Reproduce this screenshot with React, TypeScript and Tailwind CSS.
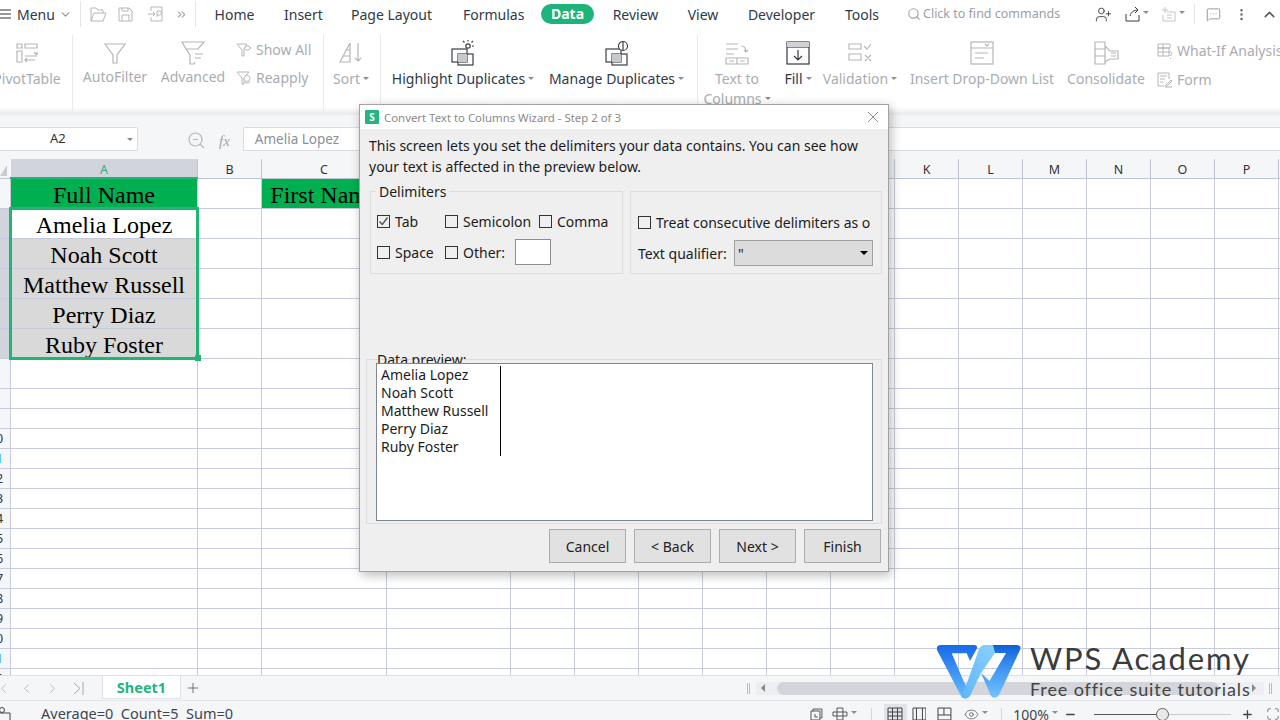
import React from 'react';
import { Search, ChevronDown, ChevronUp, ChevronLeft, ChevronRight, ChevronsRight, Plus, Minus, EllipsisVertical, MessageSquareMore, UserPlus, Eye, Maximize } from 'lucide-react';

const gridLine = 'border-[#c6ccdd]';
const columns = [
  { id: 'A', w: 'w-[187px]' }, { id: 'B', w: 'w-[64px]' }, { id: 'C', w: 'w-[125px]' }, { id: 'D', w: 'w-[124px]' },
  { id: 'E', w: 'w-[64px]' }, { id: 'F', w: 'w-[64px]' }, { id: 'G', w: 'w-[64px]' }, { id: 'H', w: 'w-[64px]' },
  { id: 'I', w: 'w-[64px]' }, { id: 'J', w: 'w-[64px]' }, { id: 'K', w: 'w-[64px]' }, { id: 'L', w: 'w-[64px]' },
  { id: 'M', w: 'w-[64px]' }, { id: 'N', w: 'w-[64px]' }, { id: 'O', w: 'w-[64px]' }, { id: 'P', w: 'w-[64px]' }, { id: 'Q', w: 'w-[64px]' },
];
const rowHeights: string[] = [...Array(7).fill('h-[30px]'), ...Array(15).fill('h-[20px]')];
const names = ['Amelia Lopez', 'Noah Scott', 'Matthew Russell', 'Perry Diaz', 'Ruby Foster'];

const Caret = () => (
  <span className="inline-block w-0 h-0 border-x-[3px] border-x-transparent border-t-[3px] border-t-[#8a8f96] align-middle ml-[3px] mb-[3px]" />
);

const Ico = ({ w = 28, h = 26, color = '#b4b6b9', children }: { w?: number; h?: number; color?: string; children: React.ReactNode }) => (
  <svg width={w} height={h} viewBox={`0 0 ${w} ${h}`} fill="none" stroke={color} strokeWidth="1.2">{children}</svg>
);

const Tab = ({ className, label }: { className: string; label: string }) => (
  <div className={`shrink-0 text-center text-[14px] text-[#2e3a48] whitespace-nowrap ${className}`}>{label}</div>
);

const RibbonBtn = ({ className, icon, label, caret, muted = true, up }: { className: string; icon: React.ReactNode; label: React.ReactNode; caret?: boolean; muted?: boolean; up?: boolean }) => (
  <div className={`shrink-0 flex flex-col items-center pt-[12px] text-[14px] leading-5 text-center ${muted ? 'text-[#a9adb2]' : 'text-[#2e3a48]'} ${className}`}>
    <div className="h-[26px] flex items-center justify-center">{icon}</div>
    <div className={up ? 'mt-[1px] whitespace-nowrap' : 'mt-[3px] whitespace-nowrap'}>
      {label}
      {caret && <Caret />}
    </div>
  </div>
);

const Sep = ({ className }: { className: string }) => <div className={`w-px shrink-0 h-[76px] mt-[7px] bg-[#e9eaec] ${className}`} />;

const DupIcon = ({ mark }: { mark: React.ReactNode }) => (
  <Ico color="#3a3f45">
    <rect x="3" y="9" width="15" height="13" fill="#fff" />
    <rect x="9" y="14" width="15" height="11" fill="none" />
    <rect x="9" y="14" width="9" height="8" fill="#c9c9c9" stroke="none" />
    {mark}
  </Ico>
);

const Box = ({ checked }: { checked?: boolean }) => (
  <span className="shrink-0 w-[13px] h-[13px] border border-[#333] bg-transparent flex items-center justify-center">
    {checked && (
      <svg width="11" height="11" viewBox="0 0 11 11" fill="none" stroke="#555" strokeWidth="1.4"><path d="M1.5 5.5 4.3 8.5 9.5 1.5" /></svg>
    )}
  </span>
);

const Check = ({ label, className = '', checked }: { label: string; className?: string; checked?: boolean }) => (
  <label className={`shrink-0 flex items-center whitespace-nowrap ${className}`}>
    <Box checked={checked} />
    <span className="ml-[5px]">{label}</span>
  </label>
);

const WizardButton = ({ label }: { label: string }) => (
  <button className="w-[77px] h-[34px] bg-[#e1e1e1] border border-[#adadad] text-[14px] text-[#222]">{label}</button>
);

const Dialog = () => (
  <div className="absolute left-[359px] top-[104px] w-[530px] h-[468px] bg-[#efefef] border border-[#a3a3a3] shadow-[2px_3px_10px_rgba(0,0,0,0.28)] text-[14px] text-[#1c1c1c] leading-[21px] z-20">
    <div className="h-[24px] bg-white flex items-center pl-[5px] pr-[9px]">
      <div className="w-[14px] h-[14px] rounded-[1px] bg-[#25b47e] text-white text-[10px] leading-[14px] text-center font-bold">S</div>
      <div className="ml-[5px] text-[11.4px] text-[#8a8a8a] whitespace-nowrap">Convert Text to Columns Wizard - Step 2 of 3</div>
      <svg className="ml-auto" width="12" height="12" viewBox="0 0 12 12" stroke="#8d8d8d" strokeWidth="1"><path d="M1 1 11 11M11 1 1 11" /></svg>
    </div>
    <p className="pt-[6px] pl-[9px] w-[511px]">This screen lets you set the delimiters your data contains. You can see how your text is affected in the preview below.</p>
    <div className="flex gap-[7px] ml-[10px] mt-[14px]">
      <div className="relative w-[253px] h-[83px] border border-[#dcdcdc] pl-[6px] pt-[19px]">
        <span className="absolute left-[5px] -top-[11px] bg-[#efefef] px-[3px]">Delimiters</span>
        <div className="flex h-[20px] items-center">
          <Check label="Tab" className="w-[68px]" checked />
          <Check label="Semicolon" className="w-[94px]" />
          <Check label="Comma" />
        </div>
        <div className="flex h-[26px] items-center mt-[8px]">
          <Check label="Space" className="w-[68px]" />
          <Check label="Other:" className="w-[70px]" />
          <div className="w-[36px] h-[26px] bg-white border border-[#8e8e8e]" />
        </div>
      </div>
      <div className="w-[252px] h-[83px] border border-[#dcdcdc] pl-[7px] pt-[20px]">
        <div className="w-[233px] h-[20px] overflow-hidden flex items-center">
          <Check label="Treat consecutive delimiters as one" />
        </div>
        <div className="flex items-center h-[26px] mt-[8px]">
          <span className="whitespace-nowrap w-[96px]">Text qualifier:</span>
          <div className="w-[139px] h-[26px] bg-[#dcdcdc] border border-[#a0a0a0] flex items-center justify-between pl-[3px] pr-[4px]">
            <span>"</span>
            <span className="w-0 h-0 border-x-[4px] border-x-transparent border-t-[4px] border-t-black" />
          </div>
        </div>
      </div>
    </div>
    <div className="relative ml-[6px] mt-[85px] w-[516px] h-[165px] border border-[#dcdcdc] pl-[9px] pt-[3px]">
      <span className="absolute left-[10px] -top-[11px]">Data preview:</span>
      <div className="relative w-[497px] h-[158px] bg-white border border-[#7f8791] pt-[2px]">
        <div className="w-[124px] h-[90px] border-r border-black pl-[4px] leading-[18px] whitespace-nowrap">
          {names.map((name) => (
            <div key={name}>{name}</div>
          ))}
        </div>
      </div>
    </div>
    <div className="flex justify-end gap-[8px] pr-[7px] mt-[5px]">
      <WizardButton label="Cancel" />
      <WizardButton label="< Back" />
      <WizardButton label="Next >" />
      <WizardButton label="Finish" />
    </div>
  </div>
);

const Logo = () => (
  <div className="absolute left-[937px] top-[643px] z-10 flex pointer-events-none">
    <svg width="84" height="58" viewBox="0 0 84 58">
      <defs>
        <linearGradient id="wa" x1="0" y1="0" x2="0" y2="1"><stop offset="0" stopColor="#1769ea" /><stop offset="1" stopColor="#66bcff" /></linearGradient>
        <linearGradient id="wb" x1="0" y1="1" x2="1" y2="0"><stop offset="0" stopColor="#5fb5fb" /><stop offset="1" stopColor="#8ad0fb" /></linearGradient>
        <linearGradient id="wc" x1="0" y1="0" x2="0" y2="1"><stop offset="0" stopColor="#0d60d8" /><stop offset="0.4" stopColor="#3a90f0" /><stop offset="1" stopColor="#72c4ff" /></linearGradient>
      </defs>
      <path d="M0 7Q-1 2 4 2H37Q41 2 39.7 6L33 18 29.7 10.3H14.7L27 39 33 52Q30 57 26 55 24 54 23 51Z" fill="url(#wa)" />
      <path d="M44 30 54 53Q58 57 62 52L83 7Q85 2 79 2H52L58 10H69L52.5 38Z" fill="url(#wc)" />
      <path d="M42 6Q44 2 48 2H56L58 10 44 30 33 53Q29 57 25 54Z" fill="url(#wb)" />
    </svg>
    <div className="ml-[9px] font-['Lato',sans-serif] whitespace-nowrap text-[#3b3b3b]">
      <div className="text-[31px] leading-[32px] tracking-[1.9px] mt-[-1px]">WPS Academy</div>
      <div className="text-[18px] leading-[22px] tracking-[0.9px] mt-[4px] text-[#444]">Free office suite tutorials</div>
    </div>
  </div>
);

export default function App() {
  return (
    <div className="relative w-[1280px] h-[720px] overflow-hidden bg-white flex flex-col font-['Noto_Sans',sans-serif]">
      {/* tabs */}
      <div className="h-[28px] shrink-0 flex items-center">
        <svg className="ml-[-1px] shrink-0" width="12" height="10" viewBox="0 0 12 10" stroke="#333" strokeWidth="1"><path d="M0 1h12M0 5h12M0 9h12" /></svg>
        <span className="ml-[6px] w-[37px] text-[14px] text-[#2e3a48]">Menu</span>
        <ChevronDown size={13} className="ml-[5px] text-[#8f9399]" />
        <div className="ml-[8px] w-px h-[26px] bg-[#e4e5e8]" />
        <svg className="ml-[9px]" width="17" height="15" viewBox="0 0 17 15" fill="none" stroke="#b4b6b9"><path d="M1 14V1h5l2 2h5v3M1 14l3-8h12l-3 8Z" /></svg>
        <svg className="ml-[11px]" width="15" height="15" viewBox="0 0 15 15" fill="none" stroke="#b4b6b9"><path d="M1 1h10l3 3v10H1ZM4 14V8h7v6M4 1v3h6V1" /></svg>
        <svg className="ml-[14px]" width="16" height="16" viewBox="0 0 16 16" fill="none" stroke="#b4b6b9"><path d="M4 1h11v14H4v-4M4 5V1M1 8h7M6 6l2 2-2 2M10 11V5h2.5a1.5 1.5 0 0 1 0 4H10" /></svg>
        <ChevronsRight size={13} className="ml-[12px] text-[#a5a8ac]" />
        <div className="ml-[7px] w-px h-[26px] bg-[#e4e5e8]" />
        <Tab className="w-[41px] ml-[18px]" label="Home" />
        <Tab className="w-[37px] ml-[29px]" label="Insert" />
        <Tab className="w-[80px] ml-[30px]" label="Page Layout" />
        <Tab className="w-[59px] ml-[32px]" label="Formulas" />
        <div className="ml-[19px] w-[53px] h-[20px] rounded-full bg-[#1db37a] text-white text-[14px] font-bold leading-[20px] text-center">Data</div>
        <Tab className="w-[47px] ml-[18px]" label="Review" />
        <Tab className="w-[32px] ml-[28px]" label="View" />
        <Tab className="w-[69px] ml-[28px]" label="Developer" />
        <Tab className="w-[36px] ml-[28px]" label="Tools" />
        <Search size={14} className="ml-[27px] text-[#a0a6b4]" />
        <span className="ml-[2px] w-[137px] text-[12.5px] text-[#9a9ea6] whitespace-nowrap">Click to find commands</span>
        <UserPlus size={17} className="ml-[35px] text-[#3d3d3d]" strokeWidth={1.3} />
        <svg className="ml-[13px]" width="15" height="15" viewBox="0 0 15 15" fill="none" stroke="#3d3d3d"><path d="M1 7v7h13V8M5 9c1-4 4-6 8-6M10 0l3 3-3 3" /></svg>
        <Caret />
        <svg className="ml-[12px]" width="15" height="15" viewBox="0 0 15 15" fill="none" stroke="#c2c4c7"><path d="M4 0v6M1 3h6M6 5h8v9H2V8M6 8h5M6 11h5" /></svg>
        <Caret />
        <div className="ml-[9px] w-px h-[20px] bg-[#e4e5e8]" />
        <MessageSquareMore size={15} className="ml-[11px] text-[#777]" strokeWidth={1.2} />
        <EllipsisVertical size={15} className="ml-[13px] text-[#666]" />
        <ChevronUp size={17} className="ml-[12px] text-[#555]" />
      </div>

      {/* ribbon */}
      <div className="h-[87px] shrink-0 flex overflow-hidden bg-[linear-gradient(#fff_91%,#e8e9ec)]">
        <RibbonBtn className="ml-[-3px] w-[60px]" label="PivotTable" icon={
          <Ico w={24} h={24}><path d="M2 3h5v4H2ZM10 3h12v4H10ZM2 10h5v11H2ZM10 15h12M19 11l3 3M22 14v-3M10 19h10M12 17l-2 2 2 2" /></Ico>
        } />
        <Sep className="ml-[15px]" />
        <RibbonBtn up className="ml-[7px] w-[70px]" label="AutoFilter" icon={
          <Ico w={24} h={24}><path d="M2 3h20l-8 11v8h-4v-8Z" /></Ico>
        } />
        <RibbonBtn up className="ml-[8px] w-[70px]" label="Advanced" icon={
          <Ico w={26} h={26}><path d="M2 2h22l-6 7H6ZM6 9l4 6v9h4l1-2M15 14h8M15 18h6" /></Ico>
        } />
        <div className="ml-[8px] w-[84px] shrink-0 flex flex-col text-[14px] text-[#a9adb2] leading-5 pt-[12px]">
          <div className="flex items-center gap-[4px]">
            <svg width="16" height="15" viewBox="0 0 16 15" fill="none" stroke="#b4b6b9"><path d="M1 1h10l-3 5v7H6V7ZM8 5q3-4 7 0-4 4-7 0Z" /></svg>
            <span>Show All</span>
          </div>
          <div className="flex items-center gap-[4px] mt-[8px]">
            <svg width="16" height="15" viewBox="0 0 16 15" fill="none" stroke="#b4b6b9"><path d="M1 1h12L8 7v6H6V7ZM8 8a3 3 0 1 0 1-3M14 10a3 3 0 0 1-5 1" /></svg>
            <span>Reapply</span>
          </div>
        </div>
        <Sep className="ml-[3px]" />
        <RibbonBtn className="ml-[5px] w-[44px]" label="Sort" caret icon={
          <Ico w={26} h={26}><path d="M2 22 12 3v19ZM5 16h7M8 10h4M20 3v18M17 18l3 3 3-3" /></Ico>
        } />
        <Sep className="ml-[7px]" />
        <RibbonBtn className="ml-[7px] w-[150px]" muted={false} label="Highlight Duplicates" caret icon={
          <DupIcon mark={<g><circle cx="19" cy="6" r="2.2" /><path d="M19 0v1.5M14 1l1.5 1.5M24 1l-1.5 1.5M25 6h-2" /></g>} />
        } />
        <RibbonBtn className="ml-[8px] w-[141px]" muted={false} label="Manage Duplicates" caret icon={
          <DupIcon mark={<g><circle cx="20" cy="6" r="4.5" fill="#fff" /><path d="M20 2v8" /></g>} />
        } />
        <Sep className="ml-[10px]" />
        <RibbonBtn className="ml-[7px] w-[64px]" label={<>Text to<br />Columns<Caret /></>} icon={
          <Ico w={26} h={24}><path d="M2 3h12M2 8h12M2 13h8M17 5q5 0 5 6M20 9l2 2 2-2M2 17h22v6H2ZM13 17v6M5 20h5M16 20h5" /></Ico>
        } />
        <RibbonBtn className="ml-[12px] w-[34px]" muted={false} label="Fill" caret icon={
          <Ico w={24} h={24} color="#33383e"><rect x="1" y="1" width="22" height="22" /><path d="M1 6h22" /><rect x="1" y="1" width="22" height="5" fill="#d0d2d5" stroke="none" /><path d="M12 9v10M8 15l4 4 4-4" /></Ico>
        } />
        <RibbonBtn className="ml-[5px] w-[80px]" label="Validation" caret icon={
          <Ico w={26} h={24}><path d="M2 3h12v5H2ZM2 13h12v6H2ZM17 5l3 3 4-5M18 14l6 6M24 14l-6 6" /></Ico>
        } />
        <RibbonBtn className="ml-[7px] w-[150px]" label="Insert Drop-Down List" icon={
          <Ico w={24} h={24}><rect x="1" y="1" width="22" height="22" /><path d="M1 7h22M15 3l2 2 2-2M5 12h13M5 17h9" /></Ico>
        } />
        <RibbonBtn className="ml-[7px] w-[84px]" label="Consolidate" icon={
          <Ico w={26} h={24}><path d="M2 1h10v22H2ZM2 8h10M2 15h10M12 5l5 5h8v8h-8l-5 3M18 12h5M18 15h5" /></Ico>
        } />
        <div className="ml-[9px] w-[140px] shrink-0 flex flex-col text-[14px] text-[#a9adb2] leading-5 pt-[13px] whitespace-nowrap">
          <div className="flex items-center gap-[4px]">
            <svg width="16" height="16" viewBox="0 0 16 16" fill="none" stroke="#b4b6b9"><path d="M1 1h12v4H1ZM1 5h11v8H1ZM6 1v12M1 9h11M12 10a1.5 1.5 0 1 1 1.5 2v1M13.5 15v1" /></svg>
            <span>What-If Analysis</span>
          </div>
          <div className="flex items-center gap-[4px] mt-[9px]">
            <svg width="16" height="16" viewBox="0 0 16 16" fill="none" stroke="#b4b6b9"><path d="M1 1h11v6M1 1v13h6M3 4h7M3 7h5M3 10h3M9 13l5-5 1 1-5 5H8ZM8 15h7" /></svg>
            <span>Form</span>
          </div>
        </div>
      </div>

      {/* formula bar */}
      <div className="h-[36px] shrink-0 bg-[#f5f6f8] pt-[12px] flex relative">
        <div className="ml-[-8px] w-[146px] h-[24px] bg-white border border-[#d9dbe0] rounded-[2px] flex items-center text-[13px] text-[#333]">
          <span className="ml-[57px]">A2</span>
          <span className="ml-auto mr-[4px] w-0 h-0 border-x-[3px] border-x-transparent border-t-[3px] border-t-[#888]" />
        </div>
        <svg className="ml-[50px] mt-[5px]" width="17" height="17" viewBox="0 0 17 17" fill="none" stroke="#b4b6b9" strokeWidth="1.2"><circle cx="7.5" cy="7.5" r="6.5" /><path d="M5 7.5h5M12 12l4 4" /></svg>
        <span className="ml-[14px] mt-[3px] text-[15px] italic font-['Liberation_Serif',serif] text-[#a5a7aa]">fx</span>
        <div className="ml-[13px] flex-1 h-[24px] bg-white border-y border-l border-[#d9dbe0] rounded-l-[2px] text-[13.5px] text-[#8b8f95] pl-[11px] leading-[22px]">Amelia Lopez</div>
      </div>

      {/* column headers */}
      <div className="h-[28px] shrink-0 bg-[#f5f6f8] flex border-b border-[#bfc5d6] pt-[8px] relative">
        <div className="w-[11px] shrink-0 relative">
          <span className="absolute left-0 top-[6px] w-0 h-0 border-b-[11px] border-b-[#c9cbd0] border-l-[7px] border-l-transparent" />
        </div>
        {columns.map((col) => (
          <div
            key={col.id}
            className={`shrink-0 text-center text-[12.5px] leading-[21px] border-r border-[#bfc5d6] ${col.w} ${col.id === 'A' ? 'bg-[#d1d4dc] text-[#25b47e]' : 'text-[#333]'}`}
          >
            {col.id}
          </div>
        ))}
        <div className="absolute left-[10px] bottom-[-1px] w-[188px] h-[2px] bg-[#21b573]" />
      </div>

      {/* grid */}
      <div className="relative flex-1 min-h-0 overflow-hidden">
        {rowHeights.map((h, i) => (
          <div key={i} className={`flex border-b ${gridLine} ${h}`}>
            <div className={`w-[11px] shrink-0 border-r ${gridLine} overflow-hidden text-[12.5px] leading-[19px] ${i >= 1 && i <= 5 ? 'bg-[#d1d4dc]' : 'bg-[#f5f6f8]'} ${i === 10 || i === 20 ? 'text-[#2f8fd8]' : 'text-[#333]'}`}>
              {i >= 9 && <span className="block -ml-[4px]">{(i + 1) % 10}</span>}
            </div>
            {columns.map((col) => {
              let text = '';
              let bg = 'bg-white';
              if (col.id === 'A' && i === 0) { text = 'Full Name'; bg = 'bg-[#00b050]'; }
              if (col.id === 'C' && i === 0) { text = 'First Name'; bg = 'bg-[#00b050]'; }
              if (col.id === 'A' && i >= 1 && i <= 5) { text = names[i - 1]; bg = i === 1 ? 'bg-white' : 'bg-[#d9d9d9]'; }
              return (
                <div
                  key={col.id}
                  className={`shrink-0 border-r ${gridLine} ${col.w} ${bg} text-center text-black text-[24px] pt-[3px] leading-[26px] whitespace-nowrap font-['Liberation_Serif',serif]`}
                >
                  {text}
                </div>
              );
            })}
          </div>
        ))}
        {/* selection */}
        <div className="absolute left-[9px] top-[28px] w-[190px] h-[153px] border-[3px] border-[#21b573]" />
        <div className="absolute left-[195px] top-[176px] w-[6px] h-[6px] bg-[#21b573]" />
      </div>

      {/* sheet tabs */}
      <div className="h-[25px] shrink-0 bg-[#f5f6f8] border-t border-[#dfe1e6] flex items-center relative">
        <ChevronLeft size={15} className="ml-[-4px] text-[#a5a8ac]" strokeWidth={1.2} />
        <ChevronLeft size={15} className="ml-[8px] text-[#a5a8ac]" strokeWidth={1.2} />
        <ChevronRight size={15} className="ml-[11px] text-[#a5a8ac]" strokeWidth={1.2} />
        <svg className="ml-[13px]" width="11" height="13" viewBox="0 0 11 13" fill="none" stroke="#a5a8ac"><path d="M1 1l6 5.5L1 12M10 0v13" /></svg>
        <div className="ml-[18px] w-[79px] h-[23px] self-start bg-white border-x border-b border-[#dfe1e6] text-center text-[14.5px] font-bold text-[#25b47e] leading-[22px]">Sheet1</div>
        <Plus size={16} className="ml-[4px] text-[#555]" strokeWidth={1.2} />
        <div className="ml-[546px] w-[3px] h-[11px] border-x border-[#b9bcc2]" />
        <div className="ml-[6px] w-[508px] h-[13px] bg-[#eceef1] flex items-center relative">
          <span className="ml-[5px] w-0 h-0 border-y-[4px] border-y-transparent border-r-[4px] border-r-[#888]" />
          <div className="absolute left-[21px] w-[442px] h-[13px] rounded-full bg-[#d3d5da]" />
          <span className="ml-auto mr-[8px] w-0 h-0 border-y-[4px] border-y-transparent border-l-[4px] border-l-[#888]" />
        </div>
        <div className="ml-[5px] w-[3px] h-[11px] border-x border-[#b9bcc2]" />
      </div>

      {/* status bar */}
      <div className="h-[20px] shrink-0 bg-[#f5f6f8] border-t border-[#e4e5e8] flex items-center text-[14px] text-[#3d4650] relative pt-[7px]">
        <svg className="ml-[-4px] shrink-0" width="16" height="14" viewBox="0 0 16 14" fill="none" stroke="#444"><circle cx="6" cy="3" r="2.5" /><path d="M2 6h12v8H2Z" /></svg>
        <span className="ml-[29px] w-[210px] text-[14.5px] whitespace-nowrap">Average=0&nbsp; Count=5&nbsp; Sum=0</span>
        <svg className="ml-[560px]" width="13" height="13" viewBox="0 0 13 13" fill="none" stroke="#555"><path d="M3 3V1h9v9h-2M1 3h9v9H1ZM5 6v3h3" /></svg>
        <svg className="ml-[9px]" width="16" height="14" viewBox="0 0 16 14" fill="none" stroke="#555"><path d="M5 1h6v4h4v4h-4v4H5V9H1V5h4ZM5 5h6v4H5Z" /></svg>
        <Caret />
        <div className="ml-[14px] w-px h-[12px] bg-[#d5d7db]" />
        <div className="ml-[12px] w-[23px] h-[20px] mt-[-1px] bg-[#e1e3e8] flex items-center justify-center">
          <svg width="16" height="14" viewBox="0 0 16 14" fill="none" stroke="#444"><path d="M1 1h14v12H1ZM1 5h14M1 9h14M5.5 1v12M10.5 1v12" /></svg>
        </div>
        <svg className="ml-[5px]" width="15" height="14" viewBox="0 0 15 14" fill="none" stroke="#444"><path d="M1 1h13v12H1ZM4.5 1v12M10.5 1v12" /></svg>
        <svg className="ml-[11px]" width="15" height="14" viewBox="0 0 15 14" fill="none" stroke="#444"><path d="M1 1h13v12H1ZM1 8h13M7 1v7" /></svg>
        <Eye size={15} className="ml-[12px] text-[#555]" strokeWidth={1.2} />
        <Caret />
        <div className="ml-[13px] w-px h-[12px] bg-[#d5d7db]" />
        <span className="ml-[11px] whitespace-nowrap">100%</span>
        <Caret />
        <Minus size={13} className="ml-[6px] text-[#444]" strokeWidth={2.5} />
        <div className="ml-[17px] w-[138px] h-[1px] bg-[#c9cbcf] relative">
          <div className="absolute left-0 top-0 w-[68px] h-[1px] bg-[#555]" />
          <div className="absolute left-[62px] -top-[6px] w-[13px] h-[13px] rounded-full bg-[#e9e9e9] border border-[#666]" />
        </div>
        <Plus size={13} className="ml-[10px] text-[#444]" strokeWidth={2.5} />
        <Maximize size={14} className="ml-[12px] text-[#555]" strokeWidth={1.2} />
      </div>

      <Dialog />
      <Logo />
    </div>
  );
}
